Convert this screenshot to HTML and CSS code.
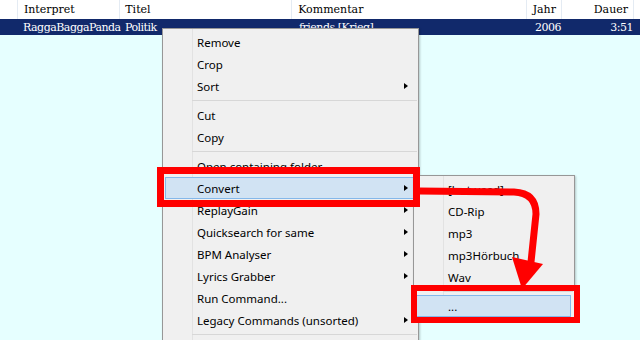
FILE: index.html
```html
<!DOCTYPE html>
<html>
<head>
<meta charset="utf-8">
<link rel="stylesheet" href="styles.css">
</head>
<body>
<div class="list">
  <div class="hdr">
    <div class="c c0"></div>
    <div class="c c1">Interpret</div>
    <div class="c c2">Titel</div>
    <div class="c c3">Kommentar</div>
    <div class="c c4">Jahr</div>
    <div class="c c5 r">Dauer</div>
    <div class="c c6"></div>
  </div>
  <div class="row sel">
    <div class="c c0"></div>
    <div class="c c1">RaggaBaggaPanda</div>
    <div class="c c2">Politik</div>
    <div class="c c3">friends [Krieg]</div>
    <div class="c c4">2006</div>
    <div class="c c5 r">3:51</div>
    <div class="c c6"></div>
  </div>
</div>

<div class="menu main">
  <div class="item">Remove</div>
  <div class="item">Crop</div>
  <div class="item sub-arrow">Sort</div>
  <div class="sep"></div>
  <div class="item">Cut</div>
  <div class="item">Copy</div>
  <div class="sep"></div>
  <div class="item">Open containing folder</div>
  <div class="item sub-arrow hl">Convert</div>
  <div class="item sub-arrow">ReplayGain</div>
  <div class="item sub-arrow">Quicksearch for same</div>
  <div class="item sub-arrow">BPM Analyser</div>
  <div class="item sub-arrow">Lyrics Grabber</div>
  <div class="item">Run Command...</div>
  <div class="item sub-arrow">Legacy Commands (unsorted)</div>
  <div class="sep"></div>
  <div class="tail"></div>
</div>

<div class="menu sub">
  <div class="item">[last used]</div>
  <div class="item">CD-Rip</div>
  <div class="item">mp3</div>
  <div class="item">mp3Hörbuch</div>
  <div class="item">Wav</div>
  <div class="sep"></div>
  <div class="item hl">...</div>
</div>

<div class="mark mark1"></div>
<div class="mark mark2"></div>
<svg class="annot" width="640" height="340" viewBox="0 0 640 340">
  <path d="M419 191 L514 192 Q536 193 536 214 L531 262" fill="none" stroke="#ff0000" stroke-width="7"/>
  <polygon points="512,257 543,264 522,289" fill="#ff0000"/>
</svg>
</body>
</html>
```
FILE: styles.css
```css
html, body {
  margin: 0;
  padding: 0;
}
body {
  width: 640px;
  height: 340px;
  overflow: hidden;
  background: #e6ffff;
  position: relative;
  font-family: "DejaVu Serif", serif;
  font-size: 11px;
}
.list {
  display: flex;
  flex-direction: column;
}
.hdr, .row {
  display: flex;
}
.hdr {
  height: 19px;
  background: #ffffff;
  color: #000;
}
.row {
  height: 16px;
  letter-spacing: -0.5px;
}
.row.sel {
  background: #11296b;
  color: #ffffff;
}
.c {
  box-sizing: border-box;
  white-space: nowrap;
  overflow: hidden;
  display: flex;
  align-items: center;
  padding-left: 5px;
}
.hdr .c {
  border-right: 1px solid #e4ebf3;
  padding-left: 6px;
}
.c0 { width: 18px; padding: 0; }
.c1 { width: 103px; }
.c2 { width: 173px; padding-left: 4px; }
.hdr .c2 { padding-left: 5px; }
.c3 { width: 236px; }
.c4 { width: 36px; }
.c5 { width: 72px; }
.c6 { flex: 1; padding: 0; }
.hdr .c6 { border-right: none; }
.c.r {
  justify-content: flex-end;
  padding-left: 0;
  padding-right: 5px;
}

.menu {
  position: absolute;
  box-sizing: border-box;
  background: #f0f0f0;
  border: 1px solid #979797;
  padding: 2px 0;
  font-family: "Noto Sans", sans-serif;
  font-size: 11.5px;
  color: #000;
  box-shadow: 1px 1px 2px rgba(0, 0, 0, 0.22);
}
.menu::before {
  content: "";
  position: absolute;
  left: 29px;
  top: 0;
  bottom: 0;
  width: 1px;
  background: #e2e2e2;
}
.main {
  left: 162px;
  top: 28px;
  width: 257px;
}
.sub {
  left: 413px;
  top: 175px;
  width: 162px;
}
.item {
  position: relative;
  box-sizing: border-box;
  height: 22px;
  margin: 0 4px 0 2px;
  padding-left: 31px;
  border: 1px solid transparent;
  display: flex;
  align-items: center;
  white-space: nowrap;
}
.sub .item {
  margin-right: 3px;
}
.item.hl {
  background: #d1e3f3;
  border-color: #84b8ea;
}
.sub-arrow::after {
  content: "";
  position: absolute;
  right: 5px;
  top: 7px;
  width: 0;
  height: 0;
  border-left: 4px solid #000;
  border-top: 3.5px solid transparent;
  border-bottom: 3.5px solid transparent;
}
.sep {
  position: relative;
  height: 7px;
}
.sep::before {
  content: "";
  position: absolute;
  left: 29px;
  right: 1px;
  top: 3px;
  height: 1px;
  background: #d7d7d7;
}
.tail {
  height: 12px;
}

.mark {
  position: absolute;
  box-sizing: border-box;
  border: 7px solid #ff0000;
}
.mark1 {
  left: 157px;
  top: 167px;
  width: 263px;
  height: 40px;
}
.mark2 {
  left: 411px;
  top: 285px;
  width: 169px;
  height: 38px;
  border-width: 6px;
}
.annot {
  position: absolute;
  left: 0;
  top: 0;
  pointer-events: none;
}
```
